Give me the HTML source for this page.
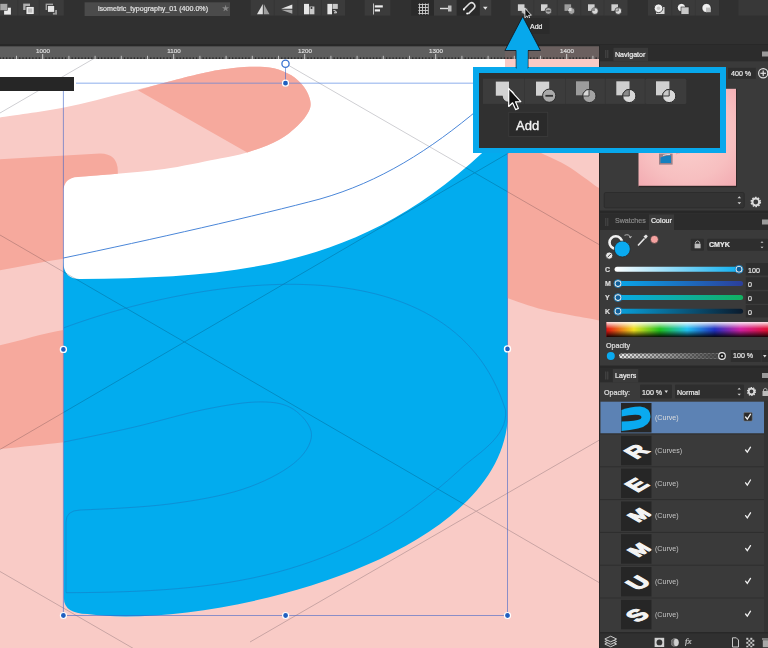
<!DOCTYPE html>
<html><head><meta charset="utf-8">
<style>
*{margin:0;padding:0;box-sizing:border-box}
html,body{width:768px;height:648px;overflow:hidden;background:#303030;font-family:"Liberation Sans",sans-serif;color:#e6e6e6}
.a{position:absolute}
.btn{position:absolute;top:0;height:16px;background:#3b3b3b}
.t{position:absolute;white-space:nowrap;line-height:1;will-change:transform;-webkit-text-stroke:0.2px currentColor}
</style></head><body>
<!-- top toolbar -->
<div class="a" style="left:0;top:0;width:768px;height:45px;background:#303030"></div>
<div class="a" style="left:0;top:43.8px;width:768px;height:2.5px;background:#282828"></div>
<svg class="a" style="left:0;top:0" width="768" height="45" viewBox="0 0 768 45">
  <g fill="#3b3b3b">
    <rect x="0" y="0" width="63.8" height="15.6"/>
    <rect x="250.6" y="0" width="94.4" height="15.6"/>
    <rect x="364.6" y="0" width="25.8" height="15.6"/>
    <rect x="434" y="0" width="22.8" height="15.6" fill="#3e3e3e"/>
    <rect x="479.6" y="0" width="11.7" height="15.6" fill="#3e3e3e"/>
    <rect x="510.4" y="0" width="117.1" height="15.6"/>
    <rect x="648" y="0" width="71" height="15.6"/>
    <rect x="738.5" y="0" width="29.5" height="15.6" fill="#383838"/>
  </g>
  <g fill="#2a2a2a">
    <rect x="411.3" y="0" width="22.7" height="15.6"/>
    <rect x="456.8" y="0" width="22.8" height="15.6"/>
  </g>
  <g stroke="#333" stroke-width="0.6">
    <line x1="17.8" y1="0" x2="17.8" y2="15.6"/><line x1="39.2" y1="0" x2="39.2" y2="15.6"/>
    <line x1="274.2" y1="0" x2="274.2" y2="15.6"/><line x1="297.8" y1="0" x2="297.8" y2="15.6"/><line x1="321.4" y1="0" x2="321.4" y2="15.6"/>
    <line x1="533.8" y1="0" x2="533.8" y2="15.6"/><line x1="557.2" y1="0" x2="557.2" y2="15.6"/><line x1="580.6" y1="0" x2="580.6" y2="15.6"/><line x1="604" y1="0" x2="604" y2="15.6"/>
    <line x1="671.7" y1="0" x2="671.7" y2="15.6"/><line x1="695.3" y1="0" x2="695.3" y2="15.6"/>
  </g>
  <!-- arrange icons -->
  <rect x="4.1" y="7.7" width="6.8" height="6.9" fill="#ececec"/>
  <rect x="0" y="3.6" width="7.7" height="6.9" fill="#a8a8a8" stroke="#333" stroke-width="0.5"/>
  <rect x="23.2" y="3.6" width="6.8" height="6.4" fill="#b0b0b0"/>
  <rect x="26" y="6.4" width="8.2" height="8.2" fill="#eaeaea" stroke="#2a2a2a" stroke-width="0.8"/>
  <rect x="28" y="8.4" width="4.2" height="4.2" fill="#bdbdbd"/>
  <rect x="45.6" y="3.6" width="7.4" height="6.4" fill="#a0a0a0"/>
  <rect x="52.9" y="10" width="4.1" height="4.6" fill="#9a9a9a"/>
  <rect x="47.4" y="5.5" width="7.3" height="6.8" fill="#e6e6e6" stroke="#2a2a2a" stroke-width="0.8"/>
  <!-- tab -->
  <rect x="84.6" y="2.3" width="145.4" height="13.7" fill="#4b4b4b"/>
  <!-- flip/rotate icons -->
  <path d="M257,14.3 L262.8,3.9 L262.8,14.3 Z" fill="#e0e0e0"/>
  <path d="M263.8,3.9 L269.5,14.3 L263.8,14.3 Z" fill="#9e9e9e"/>
  <path d="M292.3,4.4 L281.2,8.7 L292.3,8.7 Z" fill="#e6e6e6"/>
  <path d="M292.3,9.7 L281.2,9.7 L292.3,13.8 Z" fill="#a6a6a6"/>
  <rect x="304" y="3.9" width="5" height="10.4" fill="#e6e6e6"/>
  <rect x="309.5" y="6.5" width="4.9" height="7.8" fill="#c8c8c8"/>
  <circle cx="311.5" cy="8" r="1" fill="#333"/>
  <rect x="327.4" y="3.9" width="4.6" height="10.4" fill="#e6e6e6"/>
  <rect x="332.5" y="3.9" width="5.3" height="5" fill="#c8c8c8"/>
  <path d="M333.5,10.5 Q336.5,10.5 336.5,12.8 L334,12.8" stroke="#e6e6e6" stroke-width="1" fill="none"/>
  <!-- align -->
  <rect x="373" y="3.5" width="0.9" height="11" fill="#cfcfcf"/>
  <rect x="374.8" y="5.3" width="8" height="2.2" fill="#eeeeee"/>
  <rect x="374.8" y="9.3" width="5.2" height="2.2" fill="#eeeeee"/>
  <!-- snapping -->
  <g fill="#cfcfcf">
    <rect x="418.4" y="4" width="9.8" height="0.9"/><rect x="418.4" y="7" width="9.8" height="0.9"/><rect x="418.4" y="10" width="9.8" height="0.9"/><rect x="418.4" y="13" width="9.8" height="0.9"/>
    <rect x="419" y="3.5" width="0.9" height="11"/><rect x="422" y="3.5" width="0.9" height="11"/><rect x="425" y="3.5" width="0.9" height="11"/><rect x="427.8" y="3.5" width="0.9" height="11"/>
  </g>
  <rect x="440" y="7.8" width="8" height="1.4" fill="#dedede"/>
  <rect x="448" y="5.5" width="3.5" height="6" fill="#bdbdbd"/>
  <path d="M464.5,11.5 L469.8,6.2 Q472.3,3.7 474.6,6 Q476.9,8.3 474.4,10.8 L469.1,16.1" stroke="#e0e0e0" stroke-width="1.6" fill="none" transform="translate(-0.8,-2.2)"/><circle cx="463.9" cy="9.5" r="1" fill="#fff"/><circle cx="467.2" cy="13.6" r="1" fill="#fff"/>
  <path d="M483,6.8 L487.6,6.8 L485.3,9.8 Z" fill="#e6e6e6"/>
  <!-- boolean small icons -->
  <circle cx="524.5" cy="10.9" r="3.3" fill="#bdbdbd" stroke="#2a2a2a" stroke-width="0.6"/>
  <rect x="517.9" y="4.3" width="6.6" height="6.6" fill="#d2d2d2"/>
  <rect x="541" y="4.3" width="6.5" height="6.6" fill="#d2d2d2"/>
  <circle cx="548.4" cy="10.9" r="3.4" fill="#a9a9a9" stroke="#2a2a2a" stroke-width="0.7"/>
  <rect x="546.4" y="10.4" width="4" height="1" fill="#333"/>
  <rect x="564.5" y="4.3" width="6.6" height="6.6" fill="#9c9c9c"/>
  <circle cx="571.5" cy="11" r="3.4" fill="#a3a3a3" stroke="#2a2a2a" stroke-width="0.7"/>
  <path d="M571.5,11 L568.1,11 A3.4,3.4 0 0 1 571.5,7.6 Z" fill="#d8d8d8"/>
  <rect x="588" y="4.3" width="6.6" height="6.6" fill="#cfcfcf"/>
  <circle cx="594.9" cy="11" r="3.4" fill="#d8d8d8" stroke="#2a2a2a" stroke-width="0.7"/>
  <path d="M594.9,11 L591.5,11 A3.4,3.4 0 0 1 594.9,7.6 Z" fill="#8a8a8a"/>
  <rect x="611.4" y="4.3" width="6.6" height="6.6" fill="#cfcfcf"/>
  <circle cx="618.3" cy="11" r="3.4" fill="#d8d8d8" stroke="#2a2a2a" stroke-width="0.7"/>
  <path d="M618.3,11 L614.9,11 A3.4,3.4 0 0 1 618.3,7.6 Z" fill="#c0c0c0" stroke="#2a2a2a" stroke-width="0.5"/>
  <!-- geometry icons -->
  <rect x="656" y="7" width="8.5" height="7" fill="#d8d8d8"/>
  <circle cx="658.5" cy="8.3" r="4.3" fill="#f0f0f0" stroke="#262626" stroke-width="0.8"/>
  <circle cx="658.5" cy="8.3" r="1.8" fill="#c8c8c8"/>
  <circle cx="681.5" cy="7.6" r="4.2" fill="#f0f0f0" stroke="#262626" stroke-width="0.8"/>
  <rect x="681" y="7" width="8" height="7.3" fill="#c8c8c8" stroke="#262626" stroke-width="0.6"/>
  <circle cx="706.5" cy="8" r="4.6" fill="#f0f0f0" stroke="#262626" stroke-width="0.8"/>
  <rect x="706" y="7.6" width="4.8" height="4.6" fill="#bdbdbd"/>
  <!-- top arrow cursor -->
  <path d="M524.9,8.3 L524.9,17.8 L527,15.8 L528.6,19.3 L530,18.7 L528.6,15.3 L531.4,15.2 Z" fill="#111" stroke="#fff" stroke-width="0.8" stroke-linejoin="round"/>
  <!-- small tooltip -->
  <rect x="526.5" y="18" width="23" height="16" fill="#2b2b2b"/>
</svg>
<div class="t" style="left:97.5px;top:5.7px;font-size:7.1px;color:#e2e2e2">isometric_typography_01 (400.0%)</div>
<div class="t" style="left:221.5px;top:4.5px;font-size:8px;color:#8a8a8a">&#9733;</div>
<div class="t" style="left:529.5px;top:23px;font-size:7px;color:#f0f0f0">Add</div>
<!-- ruler -->
<svg class="a" style="left:0;top:45px" width="600" height="14" viewBox="0 45 600 14">
  <rect x="0" y="46.2" width="600" height="13.1" fill="#5e5e5e"/>
  <rect x="505" y="46.2" width="95" height="13.1" fill="#6b605f"/>
  <rect x="0" y="45" width="600" height="1.2" fill="#282828"/>
  <g><rect x="-0.52" y="57.3" width="1.3" height="1.9" fill="#2c2c2c"/><rect x="2.75" y="57.3" width="1.3" height="1.9" fill="#2c2c2c"/><rect x="6.03" y="57.3" width="1.3" height="1.9" fill="#2c2c2c"/><rect x="9.30" y="57.3" width="1.3" height="1.9" fill="#2c2c2c"/><rect x="12.58" y="57.3" width="1.3" height="1.9" fill="#2c2c2c"/><rect x="16.00" y="55.8" width="1" height="3.4" fill="#bdbdbd"/><rect x="19.13" y="57.3" width="1.3" height="1.9" fill="#2c2c2c"/><rect x="22.40" y="57.3" width="1.3" height="1.9" fill="#2c2c2c"/><rect x="25.68" y="57.3" width="1.3" height="1.9" fill="#2c2c2c"/><rect x="28.95" y="57.3" width="1.3" height="1.9" fill="#2c2c2c"/><rect x="32.23" y="57.3" width="1.3" height="1.9" fill="#2c2c2c"/><rect x="35.50" y="57.3" width="1.3" height="1.9" fill="#2c2c2c"/><rect x="38.78" y="57.3" width="1.3" height="1.9" fill="#2c2c2c"/><rect x="42.25" y="54" width="0.9" height="5.2" fill="#d8d8d8"/><rect x="45.33" y="57.3" width="1.3" height="1.9" fill="#2c2c2c"/><rect x="48.60" y="57.3" width="1.3" height="1.9" fill="#2c2c2c"/><rect x="51.88" y="57.3" width="1.3" height="1.9" fill="#2c2c2c"/><rect x="55.15" y="57.3" width="1.3" height="1.9" fill="#2c2c2c"/><rect x="58.43" y="57.3" width="1.3" height="1.9" fill="#2c2c2c"/><rect x="61.70" y="57.3" width="1.3" height="1.9" fill="#2c2c2c"/><rect x="64.97" y="57.3" width="1.3" height="1.9" fill="#2c2c2c"/><rect x="68.40" y="55.8" width="1" height="3.4" fill="#bdbdbd"/><rect x="71.52" y="57.3" width="1.3" height="1.9" fill="#2c2c2c"/><rect x="74.80" y="57.3" width="1.3" height="1.9" fill="#2c2c2c"/><rect x="78.07" y="57.3" width="1.3" height="1.9" fill="#2c2c2c"/><rect x="81.35" y="57.3" width="1.3" height="1.9" fill="#2c2c2c"/><rect x="84.62" y="57.3" width="1.3" height="1.9" fill="#2c2c2c"/><rect x="87.90" y="57.3" width="1.3" height="1.9" fill="#2c2c2c"/><rect x="91.17" y="57.3" width="1.3" height="1.9" fill="#2c2c2c"/><rect x="94.60" y="55.8" width="1" height="3.4" fill="#bdbdbd"/><rect x="97.72" y="57.3" width="1.3" height="1.9" fill="#2c2c2c"/><rect x="101.00" y="57.3" width="1.3" height="1.9" fill="#2c2c2c"/><rect x="104.28" y="57.3" width="1.3" height="1.9" fill="#2c2c2c"/><rect x="107.55" y="57.3" width="1.3" height="1.9" fill="#2c2c2c"/><rect x="110.82" y="57.3" width="1.3" height="1.9" fill="#2c2c2c"/><rect x="114.10" y="57.3" width="1.3" height="1.9" fill="#2c2c2c"/><rect x="117.38" y="57.3" width="1.3" height="1.9" fill="#2c2c2c"/><rect x="120.80" y="55.8" width="1" height="3.4" fill="#bdbdbd"/><rect x="123.92" y="57.3" width="1.3" height="1.9" fill="#2c2c2c"/><rect x="127.20" y="57.3" width="1.3" height="1.9" fill="#2c2c2c"/><rect x="130.47" y="57.3" width="1.3" height="1.9" fill="#2c2c2c"/><rect x="133.75" y="57.3" width="1.3" height="1.9" fill="#2c2c2c"/><rect x="137.03" y="57.3" width="1.3" height="1.9" fill="#2c2c2c"/><rect x="140.30" y="57.3" width="1.3" height="1.9" fill="#2c2c2c"/><rect x="143.57" y="57.3" width="1.3" height="1.9" fill="#2c2c2c"/><rect x="147.00" y="55.8" width="1" height="3.4" fill="#bdbdbd"/><rect x="150.12" y="57.3" width="1.3" height="1.9" fill="#2c2c2c"/><rect x="153.40" y="57.3" width="1.3" height="1.9" fill="#2c2c2c"/><rect x="156.67" y="57.3" width="1.3" height="1.9" fill="#2c2c2c"/><rect x="159.95" y="57.3" width="1.3" height="1.9" fill="#2c2c2c"/><rect x="163.22" y="57.3" width="1.3" height="1.9" fill="#2c2c2c"/><rect x="166.50" y="57.3" width="1.3" height="1.9" fill="#2c2c2c"/><rect x="169.78" y="57.3" width="1.3" height="1.9" fill="#2c2c2c"/><rect x="173.25" y="54" width="0.9" height="5.2" fill="#d8d8d8"/><rect x="176.33" y="57.3" width="1.3" height="1.9" fill="#2c2c2c"/><rect x="179.60" y="57.3" width="1.3" height="1.9" fill="#2c2c2c"/><rect x="182.87" y="57.3" width="1.3" height="1.9" fill="#2c2c2c"/><rect x="186.15" y="57.3" width="1.3" height="1.9" fill="#2c2c2c"/><rect x="189.42" y="57.3" width="1.3" height="1.9" fill="#2c2c2c"/><rect x="192.70" y="57.3" width="1.3" height="1.9" fill="#2c2c2c"/><rect x="195.97" y="57.3" width="1.3" height="1.9" fill="#2c2c2c"/><rect x="199.40" y="55.8" width="1" height="3.4" fill="#bdbdbd"/><rect x="202.53" y="57.3" width="1.3" height="1.9" fill="#2c2c2c"/><rect x="205.80" y="57.3" width="1.3" height="1.9" fill="#2c2c2c"/><rect x="209.08" y="57.3" width="1.3" height="1.9" fill="#2c2c2c"/><rect x="212.35" y="57.3" width="1.3" height="1.9" fill="#2c2c2c"/><rect x="215.62" y="57.3" width="1.3" height="1.9" fill="#2c2c2c"/><rect x="218.90" y="57.3" width="1.3" height="1.9" fill="#2c2c2c"/><rect x="222.17" y="57.3" width="1.3" height="1.9" fill="#2c2c2c"/><rect x="225.60" y="55.8" width="1" height="3.4" fill="#bdbdbd"/><rect x="228.72" y="57.3" width="1.3" height="1.9" fill="#2c2c2c"/><rect x="232.00" y="57.3" width="1.3" height="1.9" fill="#2c2c2c"/><rect x="235.28" y="57.3" width="1.3" height="1.9" fill="#2c2c2c"/><rect x="238.55" y="57.3" width="1.3" height="1.9" fill="#2c2c2c"/><rect x="241.83" y="57.3" width="1.3" height="1.9" fill="#2c2c2c"/><rect x="245.10" y="57.3" width="1.3" height="1.9" fill="#2c2c2c"/><rect x="248.37" y="57.3" width="1.3" height="1.9" fill="#2c2c2c"/><rect x="251.80" y="55.8" width="1" height="3.4" fill="#bdbdbd"/><rect x="254.92" y="57.3" width="1.3" height="1.9" fill="#2c2c2c"/><rect x="258.20" y="57.3" width="1.3" height="1.9" fill="#2c2c2c"/><rect x="261.48" y="57.3" width="1.3" height="1.9" fill="#2c2c2c"/><rect x="264.75" y="57.3" width="1.3" height="1.9" fill="#2c2c2c"/><rect x="268.03" y="57.3" width="1.3" height="1.9" fill="#2c2c2c"/><rect x="271.30" y="57.3" width="1.3" height="1.9" fill="#2c2c2c"/><rect x="274.58" y="57.3" width="1.3" height="1.9" fill="#2c2c2c"/><rect x="278.00" y="55.8" width="1" height="3.4" fill="#bdbdbd"/><rect x="281.12" y="57.3" width="1.3" height="1.9" fill="#2c2c2c"/><rect x="284.40" y="57.3" width="1.3" height="1.9" fill="#2c2c2c"/><rect x="287.68" y="57.3" width="1.3" height="1.9" fill="#2c2c2c"/><rect x="290.95" y="57.3" width="1.3" height="1.9" fill="#2c2c2c"/><rect x="294.23" y="57.3" width="1.3" height="1.9" fill="#2c2c2c"/><rect x="297.50" y="57.3" width="1.3" height="1.9" fill="#2c2c2c"/><rect x="300.77" y="57.3" width="1.3" height="1.9" fill="#2c2c2c"/><rect x="304.25" y="54" width="0.9" height="5.2" fill="#d8d8d8"/><rect x="307.32" y="57.3" width="1.3" height="1.9" fill="#2c2c2c"/><rect x="310.60" y="57.3" width="1.3" height="1.9" fill="#2c2c2c"/><rect x="313.88" y="57.3" width="1.3" height="1.9" fill="#2c2c2c"/><rect x="317.15" y="57.3" width="1.3" height="1.9" fill="#2c2c2c"/><rect x="320.43" y="57.3" width="1.3" height="1.9" fill="#2c2c2c"/><rect x="323.70" y="57.3" width="1.3" height="1.9" fill="#2c2c2c"/><rect x="326.98" y="57.3" width="1.3" height="1.9" fill="#2c2c2c"/><rect x="330.40" y="55.8" width="1" height="3.4" fill="#bdbdbd"/><rect x="333.52" y="57.3" width="1.3" height="1.9" fill="#2c2c2c"/><rect x="336.80" y="57.3" width="1.3" height="1.9" fill="#2c2c2c"/><rect x="340.07" y="57.3" width="1.3" height="1.9" fill="#2c2c2c"/><rect x="343.35" y="57.3" width="1.3" height="1.9" fill="#2c2c2c"/><rect x="346.62" y="57.3" width="1.3" height="1.9" fill="#2c2c2c"/><rect x="349.90" y="57.3" width="1.3" height="1.9" fill="#2c2c2c"/><rect x="353.18" y="57.3" width="1.3" height="1.9" fill="#2c2c2c"/><rect x="356.60" y="55.8" width="1" height="3.4" fill="#bdbdbd"/><rect x="359.73" y="57.3" width="1.3" height="1.9" fill="#2c2c2c"/><rect x="363.00" y="57.3" width="1.3" height="1.9" fill="#2c2c2c"/><rect x="366.27" y="57.3" width="1.3" height="1.9" fill="#2c2c2c"/><rect x="369.55" y="57.3" width="1.3" height="1.9" fill="#2c2c2c"/><rect x="372.82" y="57.3" width="1.3" height="1.9" fill="#2c2c2c"/><rect x="376.10" y="57.3" width="1.3" height="1.9" fill="#2c2c2c"/><rect x="379.38" y="57.3" width="1.3" height="1.9" fill="#2c2c2c"/><rect x="382.80" y="55.8" width="1" height="3.4" fill="#bdbdbd"/><rect x="385.93" y="57.3" width="1.3" height="1.9" fill="#2c2c2c"/><rect x="389.20" y="57.3" width="1.3" height="1.9" fill="#2c2c2c"/><rect x="392.48" y="57.3" width="1.3" height="1.9" fill="#2c2c2c"/><rect x="395.75" y="57.3" width="1.3" height="1.9" fill="#2c2c2c"/><rect x="399.02" y="57.3" width="1.3" height="1.9" fill="#2c2c2c"/><rect x="402.30" y="57.3" width="1.3" height="1.9" fill="#2c2c2c"/><rect x="405.57" y="57.3" width="1.3" height="1.9" fill="#2c2c2c"/><rect x="409.00" y="55.8" width="1" height="3.4" fill="#bdbdbd"/><rect x="412.12" y="57.3" width="1.3" height="1.9" fill="#2c2c2c"/><rect x="415.40" y="57.3" width="1.3" height="1.9" fill="#2c2c2c"/><rect x="418.68" y="57.3" width="1.3" height="1.9" fill="#2c2c2c"/><rect x="421.95" y="57.3" width="1.3" height="1.9" fill="#2c2c2c"/><rect x="425.23" y="57.3" width="1.3" height="1.9" fill="#2c2c2c"/><rect x="428.50" y="57.3" width="1.3" height="1.9" fill="#2c2c2c"/><rect x="431.77" y="57.3" width="1.3" height="1.9" fill="#2c2c2c"/><rect x="435.25" y="54" width="0.9" height="5.2" fill="#d8d8d8"/><rect x="438.32" y="57.3" width="1.3" height="1.9" fill="#2c2c2c"/><rect x="441.60" y="57.3" width="1.3" height="1.9" fill="#2c2c2c"/><rect x="444.88" y="57.3" width="1.3" height="1.9" fill="#2c2c2c"/><rect x="448.15" y="57.3" width="1.3" height="1.9" fill="#2c2c2c"/><rect x="451.43" y="57.3" width="1.3" height="1.9" fill="#2c2c2c"/><rect x="454.70" y="57.3" width="1.3" height="1.9" fill="#2c2c2c"/><rect x="457.98" y="57.3" width="1.3" height="1.9" fill="#2c2c2c"/><rect x="461.40" y="55.8" width="1" height="3.4" fill="#bdbdbd"/><rect x="464.52" y="57.3" width="1.3" height="1.9" fill="#2c2c2c"/><rect x="467.80" y="57.3" width="1.3" height="1.9" fill="#2c2c2c"/><rect x="471.07" y="57.3" width="1.3" height="1.9" fill="#2c2c2c"/><rect x="474.35" y="57.3" width="1.3" height="1.9" fill="#2c2c2c"/><rect x="477.62" y="57.3" width="1.3" height="1.9" fill="#2c2c2c"/><rect x="480.90" y="57.3" width="1.3" height="1.9" fill="#2c2c2c"/><rect x="484.18" y="57.3" width="1.3" height="1.9" fill="#2c2c2c"/><rect x="487.60" y="55.8" width="1" height="3.4" fill="#bdbdbd"/><rect x="490.73" y="57.3" width="1.3" height="1.9" fill="#2c2c2c"/><rect x="494.00" y="57.3" width="1.3" height="1.9" fill="#2c2c2c"/><rect x="497.27" y="57.3" width="1.3" height="1.9" fill="#2c2c2c"/><rect x="500.55" y="57.3" width="1.3" height="1.9" fill="#2c2c2c"/><rect x="503.82" y="57.3" width="1.3" height="1.9" fill="#2c2c2c"/><rect x="507.10" y="57.3" width="1.3" height="1.9" fill="#2c2c2c"/><rect x="510.38" y="57.3" width="1.3" height="1.9" fill="#2c2c2c"/><rect x="513.80" y="55.8" width="1" height="3.4" fill="#bdbdbd"/><rect x="516.93" y="57.3" width="1.3" height="1.9" fill="#2c2c2c"/><rect x="520.20" y="57.3" width="1.3" height="1.9" fill="#2c2c2c"/><rect x="523.48" y="57.3" width="1.3" height="1.9" fill="#2c2c2c"/><rect x="526.75" y="57.3" width="1.3" height="1.9" fill="#2c2c2c"/><rect x="530.02" y="57.3" width="1.3" height="1.9" fill="#2c2c2c"/><rect x="533.30" y="57.3" width="1.3" height="1.9" fill="#2c2c2c"/><rect x="536.58" y="57.3" width="1.3" height="1.9" fill="#2c2c2c"/><rect x="540.00" y="55.8" width="1" height="3.4" fill="#bdbdbd"/><rect x="543.12" y="57.3" width="1.3" height="1.9" fill="#2c2c2c"/><rect x="546.40" y="57.3" width="1.3" height="1.9" fill="#2c2c2c"/><rect x="549.68" y="57.3" width="1.3" height="1.9" fill="#2c2c2c"/><rect x="552.95" y="57.3" width="1.3" height="1.9" fill="#2c2c2c"/><rect x="556.23" y="57.3" width="1.3" height="1.9" fill="#2c2c2c"/><rect x="559.50" y="57.3" width="1.3" height="1.9" fill="#2c2c2c"/><rect x="562.78" y="57.3" width="1.3" height="1.9" fill="#2c2c2c"/><rect x="566.25" y="54" width="0.9" height="5.2" fill="#d8d8d8"/><rect x="569.33" y="57.3" width="1.3" height="1.9" fill="#2c2c2c"/><rect x="572.60" y="57.3" width="1.3" height="1.9" fill="#2c2c2c"/><rect x="575.88" y="57.3" width="1.3" height="1.9" fill="#2c2c2c"/><rect x="579.15" y="57.3" width="1.3" height="1.9" fill="#2c2c2c"/><rect x="582.43" y="57.3" width="1.3" height="1.9" fill="#2c2c2c"/><rect x="585.70" y="57.3" width="1.3" height="1.9" fill="#2c2c2c"/><rect x="588.98" y="57.3" width="1.3" height="1.9" fill="#2c2c2c"/><rect x="592.40" y="55.8" width="1" height="3.4" fill="#bdbdbd"/><rect x="595.53" y="57.3" width="1.3" height="1.9" fill="#2c2c2c"/><rect x="598.80" y="57.3" width="1.3" height="1.9" fill="#2c2c2c"/></g>
</svg>
<div class="t" style="left:27.8px;top:48px;width:30px;text-align:center;font-size:6.2px;color:#dedede">1000</div>
<div class="t" style="left:158.8px;top:48px;width:30px;text-align:center;font-size:6.2px;color:#dedede">1100</div>
<div class="t" style="left:289.8px;top:48px;width:30px;text-align:center;font-size:6.2px;color:#dedede">1200</div>
<div class="t" style="left:420.8px;top:48px;width:30px;text-align:center;font-size:6.2px;color:#dedede">1300</div>
<div class="t" style="left:551.8px;top:48px;width:30px;text-align:center;font-size:6.2px;color:#dedede">1400</div>
<svg class="a" style="left:0;top:59px" width="599" height="589" viewBox="0 59 599 589">
  <rect x="0" y="59" width="600" height="589" fill="#f9cbc6"/>
  <!-- blue shape -->
  <path d="M63.4,250 L507.5,100 L507.5,421.7 C494.3,565.5 198.8,630.0 87.5,614.0 Q63.9,613.5 63.9,598 Z" fill="#02acee"/>
  <!-- white top + J -->
  <path d="M0,59 L507.5,59 L507.5,128 C380.5,260.2 260.8,277.8 80,279 Q63.4,279 63.4,262 L63.4,190 L0,190 Z" fill="#ffffff"/>
  <!-- pink band -->
  <path d="M-5.0,120.0 C-4.2,119.6 -11.3,119.5 0.0,117.5 C11.3,115.5 41.3,112.1 63.0,107.8 C84.7,103.5 107.2,97.2 130.0,91.5 C152.8,85.8 183.1,77.6 200.0,73.7 C216.9,69.8 222.3,69.4 231.5,68.2 C240.7,67.0 247.9,66.7 255.0,66.7 C262.1,66.7 267.9,66.8 274.0,68.2 C280.1,69.6 286.3,72.2 291.3,75.3 C296.3,78.4 300.9,82.9 304.0,87.1 C307.1,91.3 309.4,96.4 310.2,100.5 C311.0,104.6 310.8,107.3 308.7,111.5 C306.6,115.7 302.6,121.0 297.6,125.7 C292.6,130.4 287.1,135.4 278.7,139.9 C270.3,144.4 257.6,149.3 247.2,152.5 C236.8,155.7 230.1,156.4 216.2,159.2 C202.4,161.9 180.7,166.6 164.2,169.0 C147.7,171.4 132.1,172.4 117.3,173.8 C102.5,175.1 96.0,175.5 75.6,176.9 C55.2,178.3 8.4,181.2 -5.0,182.0 Z" fill="#f9cbc6"/>
  <!-- salmon tip -->
  <path d="M137.8,90.2 C152.8,85.8 183.1,77.6 200.0,73.7 C216.9,69.8 222.3,69.4 231.5,68.2 C240.7,67.0 247.9,66.7 255.0,66.7 C262.1,66.7 267.9,66.8 274.0,68.2 C280.1,69.6 286.3,72.2 291.3,75.3 C296.3,78.4 300.9,82.9 304.0,87.1 C307.1,91.3 309.4,96.4 310.2,100.5 C311.0,104.6 310.8,107.3 308.7,111.5 C306.6,115.7 302.6,121.0 297.6,125.7 C292.6,130.4 287.1,135.4 278.7,139.9 C270.3,144.4 257.6,149.3 247.2,152.5 Z" fill="#f6a99d"/>
  <!-- salmon left -->
  <path d="M-5,159.5 L100,153.4 Q117.8,153.6 117.8,171 L117.8,173.75 L78,176.9 Q63.4,177.5 63.4,192 L63.4,258.7 C40,262 20,267 -5,271 Z" fill="#f6a99d"/>
  <!-- left strip lower salmon -->
  <path d="M-5,346.5 C20,341 40,334 63.4,330 L63.4,442.2 C40,445 20,447 -5,449.5 Z" fill="#f6a99d"/>
  <rect x="505" y="59" width="3" height="10" fill="#f9cbc6"/>
  <!-- right strip salmon -->
  <path d="M507.5,137.0 C513.1,139.7 531.0,148.2 541.0,153.0 C551.0,157.8 558.1,160.4 567.4,166.0 C576.7,171.6 591.0,182.7 596.8,186.7 L602,190 L602,321 L596.8,320.0 C587.1,318.1 558.9,313.5 544.0,309.8 C529.1,306.1 513.6,300.0 507.5,298.0 Z" fill="#f6a99d"/>
  <!-- gray guide lines -->
  <g stroke="#cfcfd3" stroke-width="1" fill="none" style="mix-blend-mode:multiply">
    <line x1="-5" y1="115.9" x2="100" y2="55"/>
    <line x1="285.5" y1="63.6" x2="605" y2="248"/>
    <line x1="-5" y1="232.1" x2="605" y2="586"/>
    <line x1="-5" y1="452.4" x2="605" y2="96.8"/>
    <line x1="-5" y1="568.6" x2="140" y2="652.3"/>
    <line x1="250" y1="642" x2="605" y2="436.8"/>
  </g>
  <!-- selection path outline on white -->
  <path d="M63.4,258 C150,240 260,215 320,199 C380,182 430,150 480,108" stroke="#4a86d8" stroke-width="1" fill="none"/>
  <!-- blue outline curves on blue -->
  <g stroke="#1a6fb8" stroke-opacity="0.45" stroke-width="1" fill="none">
    <path d="M63.9,327.8 C193.3,279.9 450.2,233.8 505.5,410.0 C508.7,438.0 473.8,455.5 458.9,470.5 C340.3,579.4 223.7,592.1 66.0,592.7"/>
    <path d="M63.9,442.0 C75.4,439.6 109.2,432.9 132.9,427.4 C156.6,421.9 184.5,413.4 205.8,409.2 C227.1,404.9 245.9,401.9 260.5,401.9 C275.1,401.9 284.8,403.7 293.3,409.2 C301.8,414.7 311.5,425.6 311.5,434.7 C311.5,443.8 304.8,454.7 293.3,463.8 C281.8,472.9 262.9,482.7 242.3,489.4 C221.7,496.1 194.9,500.7 169.4,504.0 C143.9,507.3 105.6,509 80,510 Q66,510.5 66,522 L66,592.5"/>
  </g>
  <!-- dark bar -->
  <rect x="0" y="77" width="74" height="14" fill="#262626"/>
  <!-- selection -->
  <g stroke="#3c64c8" stroke-opacity="0.65" stroke-width="0.9" fill="none">
    <line x1="76" y1="83.2" x2="507.5" y2="83.2" stroke-width="1.5" stroke="#4a7ee0" stroke-opacity="0.42"/>
    <line x1="63.4" y1="91" x2="63.4" y2="615.5"/>
    <line x1="507.5" y1="83" x2="507.5" y2="615.5"/>
    <line x1="63.4" y1="615.5" x2="507.5" y2="615.5"/>
    <line x1="285.5" y1="66" x2="285.5" y2="83"/>
  </g>
  <g fill="#1f5fc0" stroke="#ffffff" stroke-width="1.2">
    <circle cx="285.5" cy="83.2" r="3"/>
    <circle cx="63.4" cy="615.5" r="3"/>
    <circle cx="285.6" cy="615.5" r="3"/>
    <circle cx="507.5" cy="615.5" r="3"/>
  </g>
  <g fill="#1f5fc0" stroke="#ffffff" stroke-width="1.4">
    <circle cx="507.5" cy="348.9" r="3"/>
    <circle cx="63.4" cy="349.4" r="3"/>
  </g>
  <circle cx="285.5" cy="63.8" r="3.6" fill="#ffffff" stroke="#3a74d0" stroke-width="1.3"/>
</svg>
<!-- panel -->
<div class="a" style="left:599px;top:45px;width:169px;height:603px;background:#3a3a3a"></div>
<svg class="a" style="left:599px;top:45px" width="169" height="603" viewBox="599 45 169 603">
  <rect x="599" y="45" width="1" height="603" fill="#262626"/>
  <!-- navigator header -->
  <rect x="600" y="45" width="168" height="16.3" fill="#2c2c2c"/>
  <rect x="613.5" y="47.8" width="34.5" height="13.5" fill="#3a3a3a"/>
  <rect x="605.5" y="50" width="0.7" height="8" fill="#555"/><rect x="607.5" y="50" width="0.7" height="8" fill="#555"/>
  <rect x="762" y="51.5" width="6" height="5" fill="#9a9a9a"/>
  <!-- zoom field -->
  <rect x="728" y="67.8" width="27.8" height="11" fill="#2e2e2e"/>
  <circle cx="763.2" cy="73.3" r="4.6" fill="none" stroke="#e0e0e0" stroke-width="1.2"/>
  <rect x="760.4" y="72.7" width="5.6" height="1.2" fill="#e0e0e0"/><rect x="762.6" y="70.5" width="1.2" height="5.6" fill="#e0e0e0"/>
  <!-- preview -->
  <defs>
    <radialGradient id="pg" cx="0.5" cy="0.45" r="0.8">
      <stop offset="0" stop-color="#fad2cf"/><stop offset="0.6" stop-color="#f7bfc0"/><stop offset="1" stop-color="#f2a6ae"/>
    </radialGradient>
    <linearGradient id="gc" x1="0" x2="1"><stop offset="0" stop-color="#ffffff"/><stop offset="1" stop-color="#08aef0"/></linearGradient>
    <linearGradient id="gm" x1="0" x2="1"><stop offset="0" stop-color="#08a8ea"/><stop offset="1" stop-color="#2c3e9a"/></linearGradient>
    <linearGradient id="gy" x1="0" x2="1"><stop offset="0" stop-color="#08aaea"/><stop offset="1" stop-color="#12b060"/></linearGradient>
    <linearGradient id="gk" x1="0" x2="1"><stop offset="0" stop-color="#08a4e0"/><stop offset="1" stop-color="#0a1a2c"/></linearGradient>
    <linearGradient id="hue" x1="0" x2="1">
      <stop offset="0" stop-color="#e01010"/><stop offset="0.17" stop-color="#f0e020"/><stop offset="0.33" stop-color="#20c020"/>
      <stop offset="0.5" stop-color="#20c0f0"/><stop offset="0.67" stop-color="#2030c0"/><stop offset="0.83" stop-color="#d020a0"/><stop offset="1" stop-color="#e01030"/>
    </linearGradient>
    <linearGradient id="wb" x1="0" x2="0" y1="0" y2="1">
      <stop offset="0" stop-color="#fff" stop-opacity="0.9"/><stop offset="0.45" stop-color="#fff" stop-opacity="0"/>
      <stop offset="0.55" stop-color="#000" stop-opacity="0"/><stop offset="1" stop-color="#000" stop-opacity="0.9"/>
    </linearGradient>
    <pattern id="chk" width="4" height="4" patternUnits="userSpaceOnUse">
      <rect width="4" height="4" fill="#8a8a8a"/><rect width="2" height="2" fill="#e8e8e8"/><rect x="2" y="2" width="2" height="2" fill="#e8e8e8"/>
    </pattern>
    <linearGradient id="fade" x1="0" x2="1"><stop offset="0" stop-color="#3a3a3a" stop-opacity="0"/><stop offset="1" stop-color="#3a3a3a" stop-opacity="0.95"/></linearGradient>
  </defs>
  <rect x="638.5" y="88.8" width="97.5" height="97.8" fill="url(#pg)"/>
  <rect x="638.5" y="185.8" width="97.5" height="1.4" fill="#2e2626"/><rect x="736" y="88.8" width="1" height="98.4" fill="#2e2828"/>
  <rect x="659" y="153.6" width="13.6" height="11" fill="#9a8088"/><path d="M676,154 Q678,152.5 680,153" stroke="#f4a0a0" stroke-width="1" fill="none"/>
  <path d="M660.5,157.5 Q666,155 671,155.5 L671,163 L660.5,163 Z" fill="#1480c0"/><path d="M663,155.5 Q667,154 670,154.5" stroke="#e8f0f8" stroke-width="0.8" fill="none"/>
  <!-- dropdown -->
  <rect x="604.2" y="192.5" width="140" height="15.3" rx="1.5" fill="#333333" stroke="#2a2a2a" stroke-width="0.8"/>
  <path d="M737.5,198.3 L739.3,196.3 L741.1,198.3 Z M737.5,202.3 L739.3,204.3 L741.1,202.3 Z" fill="#cfcfcf"/>
  <circle cx="755.8" cy="202" r="3.4" fill="none" stroke="#dcdcdc" stroke-width="2"/>
  <circle cx="755.8" cy="202" r="4.6" fill="none" stroke="#dcdcdc" stroke-width="1.4" stroke-dasharray="1.6,1.3"/>
  <!-- colour header -->
  <rect x="600" y="210.5" width="168" height="3" fill="#282828"/>
  <rect x="600" y="213.5" width="168" height="16.5" fill="#2c2c2c"/>
  <rect x="649" y="214.5" width="25" height="15.5" fill="#3a3a3a"/>
  <rect x="605.5" y="218" width="0.7" height="8" fill="#555"/><rect x="607.5" y="218" width="0.7" height="8" fill="#555"/>
  <rect x="762" y="219.5" width="6" height="5" fill="#9a9a9a"/>
  <!-- colour wells -->
  <circle cx="615.8" cy="242.5" r="6.3" fill="none" stroke="#f2f2f2" stroke-width="2.6"/>
  <circle cx="622.3" cy="249" r="8" fill="#0aaaf0" stroke="#2a2a2a" stroke-width="0.8"/>
  <circle cx="609.2" cy="255.6" r="3.6" fill="#e8e8e8" stroke="#2a2a2a" stroke-width="0.8"/>
  <path d="M607.6,257.2 L610.8,254" stroke="#333" stroke-width="1"/>
  <path d="M624.5,235.3 Q629,233.5 630.5,237.5 M629,236.8 L630.5,237.8 L631.4,236" stroke="#cfcfcf" stroke-width="0.8" fill="none"/>
  <path d="M638,245.5 L644.5,238.5" stroke="#e6e6e6" stroke-width="1.6"/>
  <path d="M643.5,236.5 L646,234.5 L647.8,236.3 L645.8,239 Z" fill="#e6e6e6"/>
  <circle cx="654.4" cy="239.4" r="4" fill="#f5a2a0" stroke="#2a2a2a" stroke-width="0.6"/>
  <!-- lock + cmyk -->
  <rect x="690.8" y="238.7" width="13.2" height="12" rx="1" fill="#2e2e2e"/>
  <rect x="694.6" y="243.7" width="6" height="4.6" fill="#bcbcbc"/>
  <path d="M695.6,243.7 L695.6,242 Q697.6,239.8 699.6,242 L699.6,243.7" stroke="#bcbcbc" stroke-width="0.9" fill="none"/>
  <rect x="707.2" y="238.7" width="61" height="12" rx="1" fill="#2e2e2e"/>
  <path d="M760.5,242.7 L762,241.2 L763.5,242.7 Z M760.5,246.7 L762,248.2 L763.5,246.7 Z" fill="#cfcfcf"/>
  <!-- sliders -->
  <rect x="614.6" y="266.8" width="128.5" height="5" rx="2.5" fill="url(#gc)"/>
  <rect x="614.6" y="281.1" width="128.5" height="5" rx="2.5" fill="url(#gm)"/>
  <rect x="614.6" y="295.1" width="128.5" height="5" rx="2.5" fill="url(#gy)"/>
  <rect x="614.6" y="308.8" width="128.5" height="5" rx="2.5" fill="url(#gk)"/>
  <g fill="#0f5f9a" stroke="#e8e8e8" stroke-width="1.1">
    <circle cx="739" cy="269.3" r="3"/>
    <circle cx="618" cy="283.6" r="3"/>
    <circle cx="618" cy="297.6" r="3"/>
    <circle cx="618" cy="311.3" r="3"/>
  </g>
  <g fill="none" stroke="#1a8ad0" stroke-width="0.8">
    <circle cx="739" cy="269.3" r="4"/>
    <circle cx="618" cy="283.6" r="4"/>
    <circle cx="618" cy="297.6" r="4"/>
    <circle cx="618" cy="311.3" r="4"/>
  </g>
  <g fill="#2e2e2e">
    <rect x="745.8" y="263" width="22.2" height="12.5"/>
    <rect x="745.8" y="277.3" width="22.2" height="12.5"/>
    <rect x="745.8" y="291.3" width="22.2" height="12.5"/>
    <rect x="745.8" y="305" width="22.2" height="12.5"/>
  </g>
  <!-- spectrum -->
  <rect x="606.4" y="322" width="161.6" height="15" fill="url(#hue)"/>
  <rect x="606.4" y="322" width="161.6" height="15" fill="url(#wb)"/>
  <!-- opacity -->
  <circle cx="610.8" cy="356" r="4" fill="#0aaaf0"/>
  <rect x="619" y="353.5" width="103" height="5" rx="2.5" fill="url(#chk)"/>
  <rect x="619" y="353.5" width="103" height="5" rx="2.5" fill="url(#fade)"/>
  <circle cx="722" cy="356" r="3.3" fill="#1a1a1a" stroke="#e8e8e8" stroke-width="1.2"/>
  <circle cx="722" cy="356" r="1" fill="#e8e8e8"/>
  <rect x="730.8" y="350" width="30" height="12" fill="#2e2e2e"/>
  <rect x="761.5" y="350" width="6.5" height="12" fill="#2e2e2e"/>
  <path d="M763,355 L766.5,355 L764.75,357.5 Z" fill="#dcdcdc"/>
  <!-- layers header -->
  <rect x="600" y="365.5" width="168" height="3" fill="#282828"/>
  <rect x="600" y="368.3" width="168" height="14" fill="#2c2c2c"/>
  <rect x="612.8" y="369" width="25.5" height="13.5" fill="#3a3a3a"/>
  <rect x="605.5" y="371.5" width="0.7" height="8" fill="#555"/><rect x="607.5" y="371.5" width="0.7" height="8" fill="#555"/>
  <rect x="762" y="373" width="6" height="5" fill="#9a9a9a"/>
  <!-- opacity row -->
  <rect x="640" y="384.5" width="32" height="14" rx="1" fill="#2e2e2e"/>
  <path d="M664.5,390.5 L668,390.5 L666.25,393 Z" fill="#dcdcdc"/>
  <rect x="675" y="384.5" width="69" height="14" rx="1" fill="#2e2e2e"/>
  <path d="M737.5,389.5 L739.2,387.8 L740.9,389.5 Z M737.5,393.7 L739.2,395.4 L740.9,393.7 Z" fill="#cfcfcf"/>
  <circle cx="751.5" cy="391.5" r="2.8" fill="none" stroke="#dcdcdc" stroke-width="1.8"/>
  <circle cx="751.5" cy="391.5" r="4" fill="none" stroke="#dcdcdc" stroke-width="1.2" stroke-dasharray="1.4,1.1"/>
  <rect x="762.5" y="391" width="5.5" height="5" fill="#bcbcbc"/>
  <path d="M763.5,391 L763.5,389.4 Q765.2,387.2 767,389.4 L767,391" stroke="#bcbcbc" stroke-width="0.9" fill="none"/>
  <!-- layer rows -->
  <rect x="600" y="400.5" width="168" height="232" fill="#3a3a3a"/>
  <rect x="600.5" y="401.7" width="163.5" height="31.8" fill="#5c82b4"/>
  <g fill="#2e2e2e">
    <rect x="600" y="433.5" width="164" height="1"/>
    <rect x="600" y="466.3" width="164" height="1"/>
    <rect x="600" y="499.1" width="164" height="1"/>
    <rect x="600" y="531.9" width="164" height="1"/>
    <rect x="600" y="564.7" width="164" height="1"/>
    <rect x="600" y="597.5" width="164" height="1"/>
  </g>
  <rect x="764" y="400.5" width="4" height="232" fill="#333"/>
  <g fill="#262626">
    <rect x="621" y="403" width="30.5" height="29.5"/>
    <rect x="621" y="435.8" width="30.5" height="29.5"/>
    <rect x="621" y="468.6" width="30.5" height="29.5"/>
    <rect x="621" y="501.4" width="30.5" height="29.5"/>
    <rect x="621" y="534.2" width="30.5" height="29.5"/>
    <rect x="621" y="567" width="30.5" height="29.5"/>
    <rect x="621" y="599.8" width="30.5" height="29.5"/>
  </g>
  <!-- thumbnails -->
  <path d="M621.5,410 Q630,406.5 640,406.5 Q650.5,407.5 650.5,417 Q650,426 638,428.5 Q630,430 621.5,431 Z" fill="#0aaaf0"/>
  <path d="M621.5,416.5 Q633,414 639,415 Q643,416.5 640.5,419 Q636,421 621.5,421.5 Z" fill="#262626"/>
  <clipPath id="thc"><rect x="621" y="435.8" width="30.5" height="29.5"/><rect x="621" y="468.6" width="30.5" height="29.5"/><rect x="621" y="501.4" width="30.5" height="29.5"/><rect x="621" y="534.2" width="30.5" height="29.5"/><rect x="621" y="567" width="30.5" height="29.5"/><rect x="621" y="599.8" width="30.5" height="29.5"/></clipPath>
  <g clip-path="url(#thc)">
  <g transform="matrix(0.866,-0.5,0.866,0.5,636.3,459.5)"><text x="0" y="0" font-family="Liberation Sans" font-weight="bold" font-size="23" fill="#f4f4f4" stroke="#f4f4f4" stroke-width="1.3">R</text></g>
  <g transform="matrix(0.866,-0.5,0.866,0.5,637,492.8)"><text x="0" y="0" font-family="Liberation Sans" font-weight="bold" font-size="23" fill="#f4f4f4" stroke="#f4f4f4" stroke-width="1.3">E</text></g>
  <g transform="matrix(0.866,-0.5,0.866,0.5,638,522.7)"><text x="0" y="0" font-family="Liberation Sans" font-weight="bold" font-size="20" fill="#f4f4f4" stroke="#f4f4f4" stroke-width="1.3">M</text></g>
  <g transform="matrix(0.866,-0.5,0.866,0.5,638,557.6)"><text x="0" y="0" font-family="Liberation Sans" font-weight="bold" font-size="20" fill="#f4f4f4" stroke="#f4f4f4" stroke-width="1.3">M</text></g>
  <g transform="matrix(0.866,-0.5,0.866,0.5,637.7,591.1)"><text x="0" y="0" font-family="Liberation Sans" font-weight="bold" font-size="23" fill="#f4f4f4" stroke="#f4f4f4" stroke-width="1.3">U</text></g>
  <g transform="matrix(0.866,-0.5,0.866,0.5,637.6,622.9)"><text x="0" y="0" font-family="Liberation Sans" font-weight="bold" font-size="23" fill="#f4f4f4" stroke="#f4f4f4" stroke-width="1.3">S</text></g>
  </g>
  <!-- checkboxes -->
  <rect x="743.8" y="412.6" width="8.4" height="8.4" rx="1" fill="#2a2a2a" stroke="#777" stroke-width="0.6"/>
  <g stroke="#f0f0f0" stroke-width="1.3" fill="none" stroke-linecap="round">
    <path d="M745.6,417 L747.3,419.2 L750.5,414.2"/>
    <path d="M745.6,450 L747.3,452.2 L750.5,447.2"/>
    <path d="M745.6,482.8 L747.3,485 L750.5,480"/>
    <path d="M745.6,515.6 L747.3,517.8 L750.5,512.8"/>
    <path d="M745.6,548.4 L747.3,550.6 L750.5,545.6"/>
    <path d="M745.6,581.2 L747.3,583.4 L750.5,578.4"/>
    <path d="M745.6,614 L747.3,616.2 L750.5,611.2"/>
  </g>
  <!-- bottom toolbar -->
  <rect x="600" y="632" width="168" height="16" fill="#303030"/>
  <rect x="600" y="632" width="168" height="1.5" fill="#282828"/>
  <g stroke="#c8c8c8" stroke-width="1" fill="#3a3a3a">
    <path d="M604.8,644 L610.7,646.8 L616.6,644 L610.7,641.2 Z"/>
    <path d="M604.8,641.5 L610.7,644.3 L616.6,641.5 L610.7,638.7 Z"/>
    <path d="M604.8,639 L610.7,641.8 L616.6,639 L610.7,636.2 Z"/>
  </g>
  <rect x="654.6" y="637.8" width="9.6" height="9.2" fill="#d0d0d0"/><circle cx="659.4" cy="642.4" r="2.9" fill="#333"/>
  <circle cx="674.9" cy="642.4" r="3.9" fill="#d0d0d0"/><path d="M674.9,638.5 A3.9,3.9 0 0 0 674.9,646.3 Z" fill="#6a6a6a"/><path d="M674.9,638.5 Q672.5,642.4 674.9,646.3" fill="#d0d0d0"/>
  <g fill="#f2f2f2"><rect x="733" y="637.6" width="0" height="0"/></g>
  <path d="M732.5,637.8 L736.3,637.8 L738.5,640 L738.5,647 L732.5,647 Z" fill="none" stroke="#d8d8d8" stroke-width="0.9"/>
  <g fill="#c8c8c8">
    <rect x="746.3" y="637.8" width="2" height="2"/><rect x="750.3" y="637.8" width="2" height="2"/>
    <rect x="748.3" y="639.8" width="2" height="2"/><rect x="752.3" y="639.8" width="2" height="2"/>
    <rect x="746.3" y="641.8" width="2" height="2"/><rect x="750.3" y="641.8" width="2" height="2"/>
    <rect x="748.3" y="643.8" width="2" height="2"/><rect x="752.3" y="643.8" width="2" height="2"/>
    <rect x="746.3" y="645.8" width="2" height="1.5"/><rect x="750.3" y="645.8" width="2" height="1.5"/>
  </g>
  <rect x="762" y="638.5" width="6" height="1" fill="#c8c8c8"/>
  <rect x="762.8" y="640.2" width="5.2" height="7" fill="#a8a8a8"/>
</svg>
<div class="t" style="left:614.8px;top:51.5px;font-size:7.1px;color:#f0f0f0">Navigator</div>
<div class="t" style="left:731px;top:71.4px;font-size:7.1px;color:#e8e8e8">400 %</div>
<div class="t" style="left:615px;top:218.4px;font-size:7.1px;color:#8a8a8a">Swatches</div>
<div class="t" style="left:651px;top:218.4px;font-size:7.1px;color:#f0f0f0">Colour</div>
<div class="t" style="left:709px;top:241.7px;font-size:7.1px;color:#e8e8e8;font-weight:bold">CMYK</div>
<div class="t" style="left:605px;top:265.5px;font-size:7px;color:#dcdcdc;font-weight:bold">C</div>
<div class="t" style="left:604.5px;top:279.8px;font-size:7px;color:#dcdcdc;font-weight:bold">M</div>
<div class="t" style="left:605px;top:293.8px;font-size:7px;color:#dcdcdc;font-weight:bold">Y</div>
<div class="t" style="left:605px;top:307.5px;font-size:7px;color:#dcdcdc;font-weight:bold">K</div>
<div class="t" style="left:747.5px;top:267.8px;font-size:7.1px;color:#e8e8e8">100</div>
<div class="t" style="left:747.5px;top:281.8px;font-size:7.1px;color:#e8e8e8">0</div>
<div class="t" style="left:747.5px;top:295.8px;font-size:7.1px;color:#e8e8e8">0</div>
<div class="t" style="left:747.5px;top:309.5px;font-size:7.1px;color:#e8e8e8">0</div>
<div class="t" style="left:606px;top:342.5px;font-size:7.1px;color:#e0e0e0">Opacity</div>
<div class="t" style="left:732.5px;top:353.3px;font-size:7.1px;color:#e8e8e8">100 %</div>
<div class="t" style="left:614.5px;top:372.7px;font-size:7.1px;color:#f0f0f0">Layers</div>
<div class="t" style="left:603.5px;top:389.5px;font-size:7.1px;color:#e0e0e0">Opacity:</div>
<div class="t" style="left:642px;top:390.1px;font-size:7.1px;color:#e8e8e8">100 %</div>
<div class="t" style="left:677px;top:390.1px;font-size:7.1px;color:#e8e8e8">Normal</div>
<div class="t" style="left:655.4px;top:415.0px;font-size:7.1px;color:#dcdcdc;-webkit-text-stroke:0">(Curve)</div>
<div class="t" style="left:655.4px;top:447.8px;font-size:7.1px;color:#c4c4c4;-webkit-text-stroke:0">(Curves)</div>
<div class="t" style="left:655.4px;top:480.6px;font-size:7.1px;color:#c4c4c4;-webkit-text-stroke:0">(Curve)</div>
<div class="t" style="left:655.4px;top:513.4px;font-size:7.1px;color:#c4c4c4;-webkit-text-stroke:0">(Curve)</div>
<div class="t" style="left:655.4px;top:546.2px;font-size:7.1px;color:#c4c4c4;-webkit-text-stroke:0">(Curve)</div>
<div class="t" style="left:655.4px;top:579.0px;font-size:7.1px;color:#c4c4c4;-webkit-text-stroke:0">(Curve)</div>
<div class="t" style="left:655.4px;top:611.8px;font-size:7.1px;color:#c4c4c4;-webkit-text-stroke:0">(Curve)</div>
<div class="t" style="left:685px;top:637px;font-size:9px;color:#c8c8c8;font-style:italic;font-family:'Liberation Serif',serif">fx</div>
<!-- big callout box -->
<div class="a" style="left:473px;top:67px;width:253px;height:86px;background:#07a8ec"></div>
<div class="a" style="left:478.5px;top:72.5px;width:241.5px;height:75px;background:#303030"></div>
<svg class="a" style="left:478px;top:72px" width="242" height="76" viewBox="478 72 242 76">
  <g fill="#3c3c3c">
    <rect x="483" y="78.7" width="41.5" height="25.2"/>
    <rect x="525" y="78.7" width="40" height="25.2"/>
    <rect x="565.5" y="78.7" width="39.4" height="25.2"/>
    <rect x="605.5" y="78.7" width="39.3" height="25.2"/>
    <rect x="645.3" y="78.7" width="41" height="25.2" rx="1.5"/>
  </g>
  <!-- add -->
  <circle cx="508.7" cy="95.7" r="6.5" fill="#cfcfcf" stroke="#262626" stroke-width="0.8"/>
  <rect x="495.8" y="81.6" width="13.2" height="14.1" fill="#d2d2d2"/>
  <!-- subtract -->
  <rect x="536" y="81.6" width="13.2" height="14.1" fill="#d2d2d2"/>
  <circle cx="549.2" cy="95.7" r="6.6" fill="#a9a9a9" stroke="#2a2a2a" stroke-width="1"/>
  <rect x="545.4" y="94.9" width="7.6" height="1.8" fill="#333"/>
  <!-- intersect -->
  <rect x="576" y="81.3" width="13" height="14" fill="#9c9c9c"/>
  <circle cx="589.4" cy="96" r="6.6" fill="#a3a3a3" stroke="#2a2a2a" stroke-width="1"/>
  <path d="M589,96 L582.8,96 A6.6,6.6 0 0 1 589,89.4 Z" fill="#d8d8d8" stroke="#2a2a2a" stroke-width="0.8"/>
  <!-- xor -->
  <rect x="616.3" y="81.3" width="13.2" height="14" fill="#cfcfcf"/>
  <circle cx="629.3" cy="96" r="6.6" fill="#d8d8d8" stroke="#2a2a2a" stroke-width="1"/>
  <path d="M629.3,96 L622.7,96 A6.6,6.6 0 0 1 629.3,89.4 Z" fill="#8a8a8a" stroke="#2a2a2a" stroke-width="0.8"/>
  <!-- divide -->
  <rect x="656" y="81.3" width="13.4" height="14" fill="#d0d0d0"/>
  <circle cx="669.2" cy="96" r="6.6" fill="#d8d8d8" stroke="#2a2a2a" stroke-width="1"/>
  <path d="M669.2,96 L662.6,96 A6.6,6.6 0 0 1 669.2,89.4 Z" fill="#c8c8c8" stroke="#2a2a2a" stroke-width="0.9"/>
  <!-- tooltip -->
  <rect x="508.75" y="112.3" width="39" height="24.2" fill="#2a2a2a" stroke="#3c3c3c" stroke-width="0.8"/>
  <!-- cursor -->
  <path d="M508.7,88.4 L508.7,106.5 L512.6,102.8 L515.6,109.6 L518.4,108.4 L515.5,101.8 L520.8,101.6 Z" fill="#111" stroke="#fff" stroke-width="1.2" stroke-linejoin="round"/>
</svg>
<div class="t" style="left:515.5px;top:118.5px;font-size:13px;color:#f4f4f4;-webkit-text-stroke:0.35px #f4f4f4">Add</div>
<!-- arrow -->
<svg class="a" style="left:500px;top:10px" width="46" height="60" viewBox="500 10 46 60">
  <path d="M522.7,16.5 L540.5,50.5 L528,50.5 L528,68 L516.2,68 L516.2,50.5 L504.9,50.5 Z" fill="#07a8ec" stroke="#101820" stroke-width="1" stroke-opacity="0.85"/>
  <rect x="516.6" y="50" width="11" height="19" fill="#07a8ec"/>
</svg>
</body></html>
